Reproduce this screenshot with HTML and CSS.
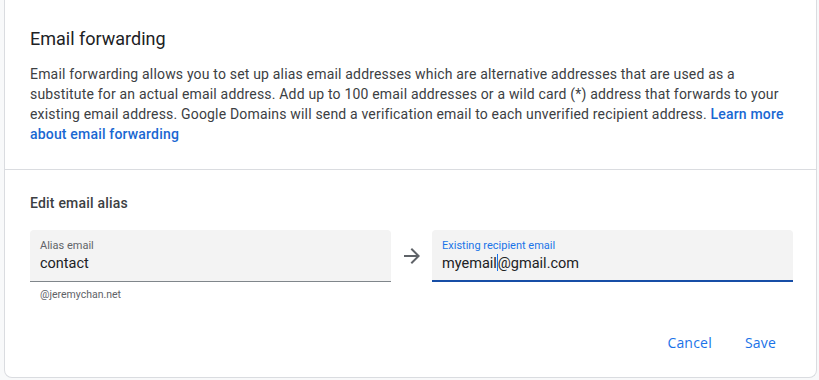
FILE: index.html
```html
<!DOCTYPE html>
<html>
<head>
  <meta charset="UTF-8">
  <title>Email forwarding</title>
  <link rel="stylesheet" href="styles.css">
</head>
<body>
<div class="card">
  <div class="intro">
    <h2 class="title">Email forwarding</h2>
    <p class="desc">Email forwarding allows you to set up alias email addresses which are alternative addresses that are used as a substitute for an actual email address. Add up to 100 email addresses or a wild card (*) address that forwards to your existing email address. Google Domains will send a verification email to each unverified recipient address. <a href="#" class="learn">Learn more about email forwarding</a></p>
  </div>
  <div class="edit">
    <h3 class="subtitle">Edit email alias</h3>
    <div class="fields">
      <div class="col">
        <div class="field">
          <label class="field-label">Alias email</label>
          <div class="field-value">contact</div>
        </div>
        <div class="hint">@jeremychan.net</div>
      </div>
      <div class="arrow">
        <svg width="24" height="24" viewBox="0 0 24 24"><path fill="#5f6368" d="M12 4l-1.41 1.41L16.17 11H4v2h12.17l-5.58 5.59L12 20l8-8z"/></svg>
      </div>
      <div class="col">
        <div class="field focused">
          <label class="field-label">Existing recipient email</label>
          <div class="field-value">myemail<span class="caret"></span>@gmail.com</div>
        </div>
      </div>
    </div>
    <div class="actions">
      <button class="btn">Cancel</button>
      <button class="btn">Save</button>
    </div>
  </div>
</div>
</body>
</html>
```

FILE: styles.css
```css
body {
  margin: 0;
  background-color: #f8f9fa;
  font-family: Roboto, "Liberation Sans", sans-serif;
  color: #3c4043;
}

.card {
  margin-left: 4px;
  width: 813px;
  height: 378px;
  box-sizing: border-box;
  background-color: #ffffff;
  border: 1px solid #dadce0;
  border-top: 0;
  border-radius: 0 0 8px 8px;
}

.intro {
  padding: 25px 24px 25px 25px;
  border-bottom: 1px solid #dadce0;
}

.title {
  margin: 0;
  font-family: Roboto, "Open Sans", sans-serif;
  font-size: 18px;
  font-weight: 400;
  line-height: 28px;
  color: #202124;
}

.desc {
  margin: 11px 0 0;
  font-size: 14px;
  line-height: 20px;
  letter-spacing: 0.18px;
}

.learn {
  color: #1967d2;
  font-weight: 500;
  text-decoration: none;
}

.edit {
  padding: 23px 23px 0 25px;
}

.subtitle {
  margin: 0;
  font-size: 14px;
  font-weight: 500;
  line-height: 20px;
  color: #3c4043;
  letter-spacing: 0.2px;
}

.fields {
  display: flex;
  margin-top: 17px;
}

.col {
  flex: 1;
}

.field {
  height: 52px;
  box-sizing: border-box;
  padding: 8px 10px 0;
  background-color: #f3f3f3;
  border-radius: 4px 4px 0 0;
  border-bottom: 1px solid #80868b;
}

.field.focused {
  border-bottom: 2px solid #174ea6;
}

.field-label {
  display: block;
  font-size: 11px;
  line-height: 16px;
  color: #5f6368;
}

.focused .field-label {
  color: #1a73e8;
}

.field-value {
  font-size: 14.5px;
  line-height: 20px;
  color: #202124;
}

.caret {
  display: inline-block;
  width: 1px;
  height: 17px;
  margin: 0 0 -3px 0;
  background-color: #1a73e8;
}

.arrow {
  width: 41px;
  height: 52px;
  display: flex;
  align-items: center;
  justify-content: center;
}

.hint {
  margin-top: 5px;
  padding-left: 10px;
  font-size: 10.5px;
  line-height: 16px;
  color: #5f6368;
}

.actions {
  display: flex;
  justify-content: flex-end;
  gap: 2px;
  margin: 21px 2px 0 0;
}

.btn {
  height: 36px;
  padding: 0 15px 0 16px;
  border: 0;
  background: none;
  font-family: "Open Sans", Roboto, sans-serif;
  font-size: 14px;
  font-weight: 500;
  color: #1a73e8;
  letter-spacing: 0.2px;
}
```
